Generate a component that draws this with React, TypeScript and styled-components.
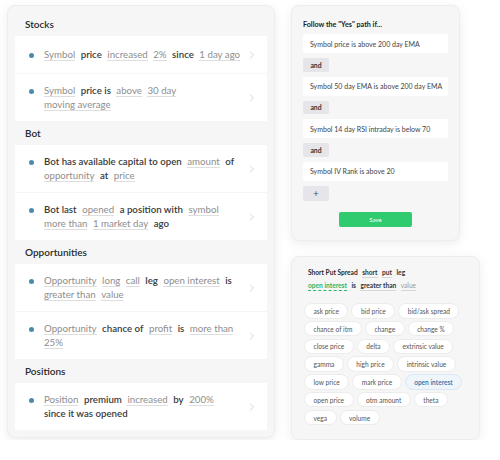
import React from 'react'
import styled, { createGlobalStyle } from 'styled-components'
import { ChevronRight } from 'lucide-react'

type Seg = { t: string; tok?: boolean }
type Rule = { lines: Seg[][] }
type Section = { title: string; rules: Rule[] }

const p = (t: string): Seg => ({ t })
const k = (t: string): Seg => ({ t, tok: true })

const sections: Section[] = [
    {
        title: 'Stocks',
        rules: [
            { lines: [[k('Symbol'), p('price'), k('increased'), k('2%'), p('since'), k('1 day ago')]] },
            { lines: [[k('Symbol'), p('price is'), k('above'), k('30 day')], [k('moving average')]] },
        ],
    },
    {
        title: 'Bot',
        rules: [
            { lines: [[p('Bot has available capital to open'), k('amount'), p('of')], [k('opportunity'), p('at'), k('price')]] },
            { lines: [[p('Bot last'), k('opened'), p('a position with'), k('symbol')], [k('more than'), k('1 market day'), p('ago')]] },
        ],
    },
    {
        title: 'Opportunities',
        rules: [
            { lines: [[k('Opportunity'), k('long'), k('call'), p('leg'), k('open interest'), p('is')], [k('greater than'), k('value')]] },
            { lines: [[k('Opportunity'), p('chance of'), k('profit'), p('is'), k('more than')], [k('25%')]] },
        ],
    },
    {
        title: 'Positions',
        rules: [
            { lines: [[k('Position'), p('premium'), k('increased'), p('by'), k('200%')], [p('since it was opened')]] },
        ],
    },
]

const conditions = [
    'Symbol price is above 200 day EMA',
    'Symbol 50 day EMA is above 200 day EMA',
    'Symbol 14 day RSI intraday is below 70',
    'Symbol IV Rank is above 20',
]

const chipRows = [
    ['ask price', 'bid price', 'bid/ask spread'],
    ['chance of itm', 'change', 'change %'],
    ['close price', 'delta', 'extrinsic value'],
    ['gamma', 'high price', 'intrinsic value'],
    ['low price', 'mark price', 'open interest'],
    ['open price', 'otm amount', 'theta'],
    ['vega', 'volume'],
]

const App = () => {
    return (
        <Page>
            <GlobalStyle />
            <RulesCard>
                {sections.map(section => (
                    <React.Fragment key={section.title}>
                        <SectionTitle>{section.title}</SectionTitle>
                        {section.rules.map((rule, i) => (
                            <RuleRow key={i}>
                                <RuleBody>
                                    <Dot />
                                    <RuleText>
                                        {rule.lines.map((line, j) => (
                                            <Line key={j}>
                                                {line.map((seg, n) =>
                                                    seg.tok ? <Token key={n}>{seg.t}</Token> : <Plain key={n}>{seg.t}</Plain>
                                                )}
                                            </Line>
                                        ))}
                                    </RuleText>
                                </RuleBody>
                                <ChevronRight size={12} strokeWidth={1.8} color="#cfcfcf" />
                            </RuleRow>
                        ))}
                    </React.Fragment>
                ))}
            </RulesCard>

            <RightColumn>
                <PathCard>
                    <PathTitle>Follow the "Yes" path if...</PathTitle>
                    <PathList>
                        {conditions.map((c, i) => (
                            <React.Fragment key={c}>
                                {i > 0 && <AndTag>and</AndTag>}
                                <Condition>{c}</Condition>
                            </React.Fragment>
                        ))}
                        <AddButton>+</AddButton>
                    </PathList>
                    <SaveButton>Save</SaveButton>
                </PathCard>

                <FieldCard>
                    <FieldHead>
                        <HeadLine>
                            <HeadStrong>Short Put Spread</HeadStrong>
                            <HeadToken>short</HeadToken>
                            <HeadToken>put</HeadToken>
                            <HeadPlain>leg</HeadPlain>
                        </HeadLine>
                        <HeadLine>
                            <ActiveField>open interest</ActiveField>
                            <HeadPlain>is</HeadPlain>
                            <HeadToken>greater than</HeadToken>
                            <HeadToken $muted>value</HeadToken>
                        </HeadLine>
                    </FieldHead>
                    <Chips>
                        {chipRows.map((row, i) => (
                            <ChipRow key={i}>
                                {row.map(c => (
                                    <Chip key={c} $active={c === 'open interest'}>{c}</Chip>
                                ))}
                            </ChipRow>
                        ))}
                    </Chips>
                </FieldCard>
            </RightColumn>
        </Page>
    )
}

export default App

const GlobalStyle = createGlobalStyle`
    body {
        margin: 0;
        background: #ffffff;
        font-family: Lato, "Liberation Sans", sans-serif;
    }
`

const Page = styled.div`
    display: flex;
    align-items: flex-start;
    gap: 16px;
    padding: 5px 0 0 7px;
`

const RulesCard = styled.div`
    width: 268px;
    box-sizing: border-box;
    background: #f6f6f6;
    border: 1px solid #ededed;
    border-radius: 8px;
    box-shadow: 0 3px 12px rgba(0, 0, 0, 0.07);
    padding: 6px 7px 7px 7px;
    display: flex;
    flex-direction: column;
`

const SectionTitle = styled.div`
    height: 24px;
    display: flex;
    align-items: center;
    padding-left: 10px;
    font-size: 10px;
    font-weight: 600;
    color: #2a2a2a;
`

const RuleRow = styled.div`
    background: #ffffff;
    min-height: 37px;
    box-sizing: border-box;
    padding: 9.5px 9px 9.5px 14px;
    display: flex;
    align-items: center;
    justify-content: space-between;
    & + & {
        margin-top: 1px;
    }
`

const RuleBody = styled.div`
    display: flex;
    align-items: flex-start;
`

const Dot = styled.span`
    width: 5px;
    height: 5px;
    border-radius: 50%;
    background: #4a8bad;
    margin: 5px 10px 0 0;
    flex-shrink: 0;
`

const RuleText = styled.div`
    display: flex;
    flex-direction: column;
`

const Line = styled.div`
    display: flex;
    align-items: baseline;
    height: 14px;
    gap: 5.5px;
    white-space: nowrap;
    font-size: 9.7px;
`

const Plain = styled.span`
    color: #3a3a3a;
    font-weight: 600;
`

const Token = styled.span`
    color: #8e8e8e;
    line-height: 12px;
    border-bottom: 1.5px solid #dedede;
    padding-bottom: 0.5px;
`

const RightColumn = styled.div`
    display: flex;
    flex-direction: column;
    align-items: flex-start;
    gap: 15px;
`

const PathCard = styled.div`
    width: 169px;
    box-sizing: border-box;
    background: #f6f6f6;
    border: 1px solid #ededed;
    border-radius: 8px;
    box-shadow: 0 3px 12px rgba(0, 0, 0, 0.07);
    padding: 14px 11px 13px 11px;
    display: flex;
    flex-direction: column;
`

const PathTitle = styled.div`
    font-size: 7.2px;
    font-weight: 700;
    color: #222;
    line-height: 10px;
    margin-bottom: 4px;
`

const PathList = styled.div`
    display: flex;
    flex-direction: column;
    align-items: flex-start;
    gap: 5px;
`

const Condition = styled.div`
    width: 145px;
    height: 19px;
    box-sizing: border-box;
    background: #ffffff;
    border-radius: 2px;
    padding-left: 7px;
    display: flex;
    align-items: center;
    font-size: 7px;
    color: #444;
`

const AndTag = styled.div`
    width: 26px;
    height: 13.5px;
    background: #e5e5ea;
    border-radius: 2px;
    display: flex;
    align-items: center;
    justify-content: center;
    font-size: 6.8px;
    font-weight: 700;
    color: #333;
`

const AddButton = styled(AndTag)`
    height: 15px;
    font-size: 10px;
    font-weight: 400;
    color: #555;
`

const SaveButton = styled.div`
    align-self: center;
    width: 73px;
    height: 15px;
    margin-top: 11.5px;
    background: #2fcb6e;
    border-radius: 2px;
    display: flex;
    align-items: center;
    justify-content: center;
    font-size: 6px;
    color: #ffffff;
`

const FieldCard = styled.div`
    width: 189px;
    box-sizing: border-box;
    background: #f6f6f6;
    border: 1px solid #ededed;
    border-radius: 8px;
    box-shadow: 0 3px 12px rgba(0, 0, 0, 0.07);
    padding: 11px 12px 14px 12px;
`

const FieldHead = styled.div`
    padding-left: 4px;
    display: flex;
    flex-direction: column;
    gap: 3px;
    margin-bottom: 12px;
`

const HeadLine = styled.div`
    display: flex;
    align-items: baseline;
    gap: 4.5px;
    height: 10px;
    font-size: 6.6px;
    white-space: nowrap;
`

const HeadStrong = styled.span`
    font-weight: 700;
    color: #2a2a2a;
`

const HeadPlain = styled.span`
    font-weight: 700;
    color: #333;
`

const HeadToken = styled.span<{ $muted?: boolean }>`
    color: ${p => (p.$muted ? '#9a9a9a' : '#333')};
    font-weight: ${p => (p.$muted ? 400 : 700)};
    border-bottom: 1px solid #d6d6d6;
    padding-bottom: 1px;
`

const ActiveField = styled.span`
    color: #2db566;
    font-weight: 700;
    border-bottom: 1.5px dashed #2db566;
    padding-bottom: 1px;
`

const Chips = styled.div`
    display: flex;
    flex-direction: column;
    gap: 2.3px;
`

const ChipRow = styled.div`
    display: flex;
    gap: 3px;
`

const Chip = styled.div<{ $active?: boolean }>`
    height: 15.5px;
    box-sizing: border-box;
    padding: 0 8.5px;
    border-radius: 8px;
    display: flex;
    align-items: center;
    font-size: 6.6px;
    white-space: nowrap;
    background: ${p => (p.$active ? '#eef5fb' : '#ffffff')};
    border: 1px solid ${p => (p.$active ? '#dbe8f3' : '#ececec')};
    color: ${p => (p.$active ? '#2f6fa6' : '#555')};
    font-weight: ${p => (p.$active ? 600 : 400)};
`
